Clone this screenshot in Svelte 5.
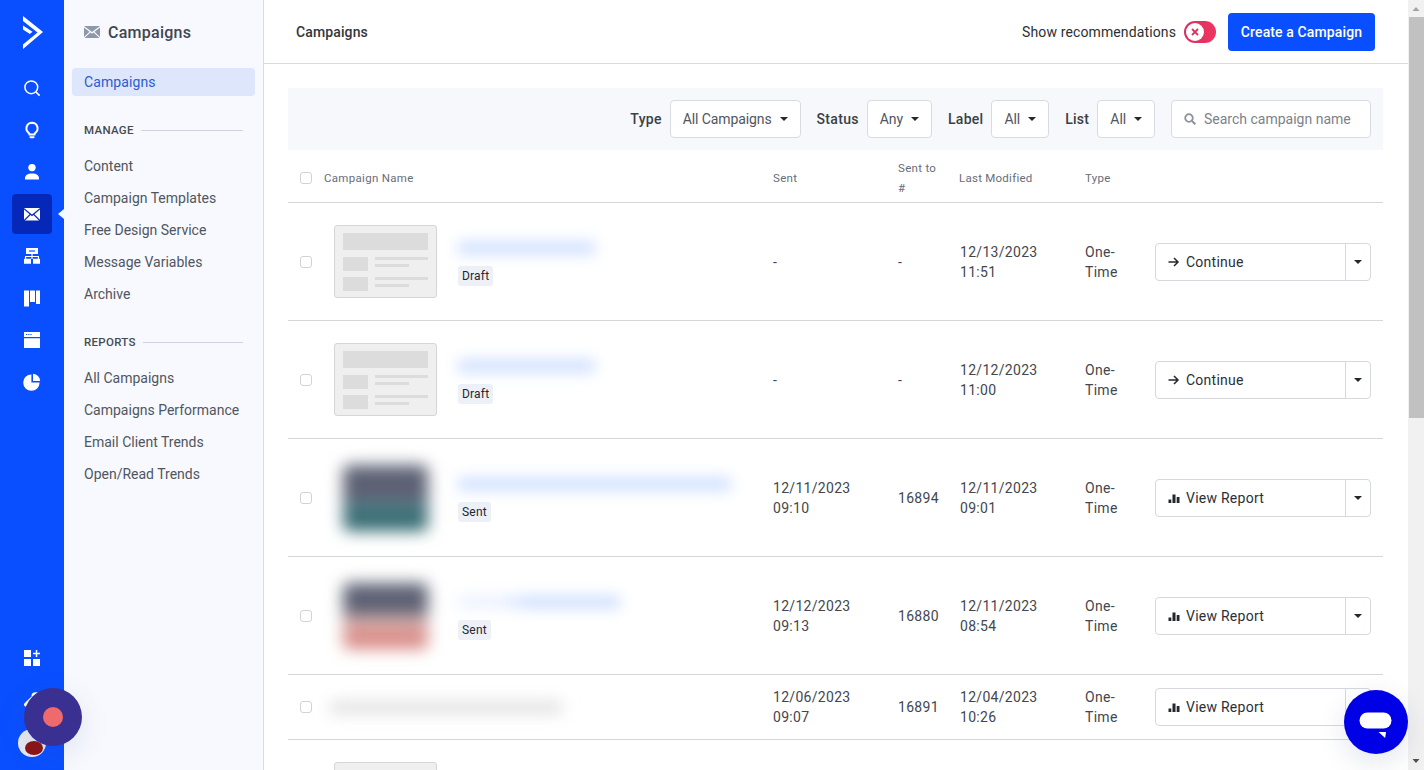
<script lang="ts">
  const manage = ['Content', 'Campaign Templates', 'Free Design Service', 'Message Variables', 'Archive'];
  const reports = ['All Campaigns', 'Campaigns Performance', 'Email Client Trends', 'Open/Read Trends'];

  const filters = [
    { label: 'Type', value: 'All Campaigns' },
    { label: 'Status', value: 'Any' },
    { label: 'Label', value: 'All' },
    { label: 'List', value: 'All' }
  ];

  const rows = [
    { thumb: 'draft', titleWidth: 137, status: 'Draft', sent: ['-'], count: '-', modified: ['12/13/2023', '11:51'], type: 'One-Time', action: 'Continue' },
    { thumb: 'draft', titleWidth: 137, status: 'Draft', sent: ['-'], count: '-', modified: ['12/12/2023', '11:00'], type: 'One-Time', action: 'Continue' },
    { thumb: 'teal', titleWidth: 273, status: 'Sent', sent: ['12/11/2023', '09:10'], count: '16894', modified: ['12/11/2023', '09:01'], type: 'One-Time', action: 'View Report' },
    { thumb: 'red', titleWidth: 162, status: 'Sent', sent: ['12/12/2023', '09:13'], count: '16880', modified: ['12/11/2023', '08:54'], type: 'One-Time', action: 'View Report' },
    { thumb: '', titleWidth: 0, status: '', sent: ['12/06/2023', '09:07'], count: '16891', modified: ['12/04/2023', '10:26'], type: 'One-Time', action: 'View Report' },
    { thumb: 'draft', titleWidth: 0, status: '', sent: [], count: '', modified: [], type: '', action: '' }
  ];
</script>

{#snippet railIcon(name)}
  <svg viewBox="0 0 20 20" width="20" height="20" fill="#fff">
    {#if name === 'search'}
      <circle cx="9.3" cy="9.3" r="6.4" fill="none" stroke="#fff" stroke-width="1.5" />
      <path d="M14 14l3.6 3.6" stroke="#fff" stroke-width="1.7" />
    {:else if name === 'bulb'}
      <path d="M10 2.8a5.6 5.6 0 0 0-3.3 10.1c.6.5.9 1 .9 1.6h4.8c0-.6.3-1.1.9-1.6A5.6 5.6 0 0 0 10 2.8z" fill="none" stroke="#fff" stroke-width="2" />
      <path d="M7.6 16.2h4.8v1.1l-1 1h-2.8l-1-1z" />
    {:else if name === 'person'}
      <circle cx="10" cy="5.6" r="3.7" />
      <path d="M3 17.6v-1.4c0-3 2.6-4.8 7-4.8s7 1.8 7 4.8v1.4z" />
    {:else if name === 'mail'}
      <path d="M2 4h16L10 10.6z" />
      <path d="M2 5.6v10.2l5.6-5.6zM18 5.6v10.2l-5.6-5.6zM8.6 11l1.4 1.2 1.4-1.2 5.6 5.6H3z" />
    {:else if name === 'flow'}
      <path d="M4 2h12v6H4z" />
      <path d="M7 4.400h6v1.200H7z" fill="#0a4fff" />
      <path d="M9.400 8h1.200v1.900h6.400V13h-1.200v-1.900H10.600V13H9.400v-1.900H4.200V13H3V9.900h6.400z" />
      <path d="M2 12.800h7v5H2zM11 12.800h7v5h-7z" />
    {:else if name === 'board'}
      <path d="M2 2.500h5v16H2zM8 2.500h5v11.500H8zM14 2.500h4v13.500h-4z" />
    {:else if name === 'window'}
      <path d="M2 2h16v5H2zM2 8.200h16V18H2z" />
      <path d="M4 4h1.200v1H4zM6.200 4h1.200v1H6.200zM8.400 4h1.200v1H8.400z" fill="#0a4fff" />
    {:else if name === 'pie'}
      <path d="M11 1.800A8.200 8.200 0 0 1 18.200 9H11z" />
      <path d="M9.400 2.400v8.200h8.200A8.200 8.200 0 1 1 9.400 2.400z" />
    {:else if name === 'add'}
      <path d="M2 2h7v7H2zM2 11h7v7H2zM11 11h7v7h-7z" />
      <path d="M13.800 2h1.500v2.800h2.700v1.400h-2.700V9h-1.500V6.200H11V4.800h2.800z" />
    {:else if name === 'wrench'}
      <path d="M16 2.500l-3 3 1.500 1.500 3-3c.6 2.500-1 5-3.500 5-.6 0-1 0-1.500-.2L5.500 16a2 2 0 0 1-3-2.800l7.200-7C9 3 12.500 1.500 16 2.500z" />
    {/if}
  </svg>
{/snippet}

{#snippet caret()}
  <svg class="caret" viewBox="0 0 8 4" width="8" height="4"><path d="M0 0h8L4 4z" fill="#23272e" /></svg>
{/snippet}

<div class="page">
  <nav class="rail">
    <div class="logo">
      <svg viewBox="0 0 20 33" width="20" height="33" fill="#fff">
        <path d="M0 0 20 16 0 33v-4.500L14.500 16.500 0 5z" />
        <path d="M0 9.500 9.500 15.800 6.800 18 0 13.500z" />
      </svg>
    </div>
    <div class="rail-group">
      {#each ['search', 'bulb', 'person', 'mail', 'flow', 'board', 'window', 'pie'] as icon}
        <div class="rail-item" class:active={icon === 'mail'}>{@render railIcon(icon)}</div>
      {/each}
    </div>
    <div class="rail-bottom">
      <div class="rail-item">{@render railIcon('add')}</div>
      <div class="rail-item">{@render railIcon('wrench')}</div>
      <div class="rail-item">
        <div class="avatar"><span class="avatar-mark"></span></div>
      </div>
    </div>
  </nav>

  <aside class="side">
    <div class="side-title">
      <svg viewBox="0 0 16 12" width="16" height="12"><path d="M0 0h16L8 6z M0 1.500v9.500L5.500 5.800z M16 1.500v9.500L10.500 5.800z M6.400 6.600 8 7.800l1.600-1.200L15.500 12H.5z" fill="#8f98a8" /></svg>
      <span>Campaigns</span>
    </div>
    <a class="side-active" href="#campaigns">Campaigns</a>

    <div class="side-heading first"><span>MANAGE</span><i></i></div>
    {#each manage as item}
      <div class="side-item">{item}</div>
    {/each}

    <div class="side-heading"><span>REPORTS</span><i></i></div>
    {#each reports as item}
      <div class="side-item">{item}</div>
    {/each}
  </aside>

  <main class="main">
    <header class="top">
      <span class="top-title">Campaigns</span>
      <div class="top-right">
        <span class="rec">Show recommendations</span>
        <div class="toggle">
          <span class="knob">
            <svg viewBox="0 0 8 8" width="8" height="8"><path d="M1 1l6 6M7 1L1 7" stroke="#e0305f" stroke-width="1.800" /></svg>
          </span>
        </div>
        <button class="create">Create a Campaign</button>
      </div>
    </header>

    <div class="content">
      <div class="filters">
        {#each filters as f}
          <div class="filter">
            <span class="filter-label">{f.label}</span>
            <div class="select">{f.value}{@render caret()}</div>
          </div>
        {/each}
        <div class="search">
          <svg viewBox="0 0 12 12" width="12" height="12"><circle cx="5" cy="5" r="3.800" fill="none" stroke="#8c929c" stroke-width="1.800" /><path d="M8 8l3.300 3.300" stroke="#8c929c" stroke-width="2" /></svg>
          <span>Search campaign name</span>
        </div>
      </div>

      <div class="grid head">
        <div class="check-cell"><span class="check"></span></div>
        <div>Campaign Name</div>
        <div>Sent</div>
        <div>Sent to<br />#</div>
        <div class="nudge">Last Modified</div>
        <div>Type</div>
        <div></div>
      </div>

      {#each rows as row}
        <div class="grid row" class:compact={!row.thumb}>
          <div class="check-cell">{#if row.action}<span class="check"></span>{/if}</div>
          <div class="name">
            {#if row.thumb}
              <div class="thumb-box">
                {#if row.thumb === 'draft'}
                  <div class="thumb">
                    <div class="ph-top"></div>
                    <div class="ph-line"><b></b><span><i></i><i class="short"></i></span></div>
                    <div class="ph-line"><b></b><span><i></i><i class="short"></i></span></div>
                  </div>
                {:else}
                  <div class="thumb-blur {row.thumb}"></div>
                {/if}
              </div>
              {#if row.status}
                <div class="name-text">
                  <div class="title-blur" class:fade={row.thumb === 'red'} style="width: {row.titleWidth}px"></div>
                  <span class="badge">{row.status}</span>
                </div>
              {/if}
            {:else}
              <div class="plain-blur"></div>
            {/if}
          </div>
          <div>{#each row.sent as l}<div>{l}</div>{/each}</div>
          <div>{row.count}</div>
          <div>{#each row.modified as l}<div>{l}</div>{/each}</div>
          <div class="type">{row.type}</div>
          <div class="action-cell">
            {#if row.action}
              <div class="action">
                <div class="action-main">
                  {#if row.action === 'Continue'}
                    <svg viewBox="0 0 12 12" width="12" height="12"><path d="M.5 6h9.500M6 2 10 6l-4 4" fill="none" stroke="#23272e" stroke-width="1.500" /></svg>
                  {:else}
                    <svg viewBox="0 0 12 12" width="12" height="12"><path d="M.5 7.500h2.800v3.500H.5zM4.500 2.500h3v8.500h-3zM8.700 5h2.800v6H8.700z" fill="#23272e" /></svg>
                  {/if}
                  <span>{row.action}</span>
                </div>
                <div class="action-more">{@render caret()}</div>
              </div>
            {/if}
          </div>
        </div>
      {/each}
    </div>
  </main>

  <div class="scrollbar">
    <svg viewBox="0 0 16 17" width="16" height="17"><path d="M4.500 11 8 7l3.500 4z" fill="#a3a3a3" /></svg>
    <div class="scroll-track"><div class="scroll-thumb"></div></div>
    <svg viewBox="0 0 16 17" width="16" height="17"><path d="M4.500 6 8 10l3.500-4z" fill="#505050" /></svg>
  </div>

  <div class="record"><span></span></div>
  <div class="chat">
    <svg viewBox="0 0 34 28" width="34" height="28">
      <rect x="0.500" y="0.500" width="32" height="16" rx="8" fill="#fff" />
      <path d="M19.500 20h7.500l-.8 6z" fill="#fff" />
    </svg>
  </div>
</div>

<style>
  :global(body) {
    margin: 0;
    background: #fff;
  }

  .page {
    position: relative;
    display: flex;
    height: 770px;
    overflow: hidden;
    font-family: Roboto, "Noto Sans", sans-serif;
    font-size: 14px;
    letter-spacing: 0.3px;
    color: #2b2f36;
  }

  /* icon rail */
  .rail {
    flex: 0 0 64px;
    display: flex;
    flex-direction: column;
    align-items: center;
    background: #0a4fff;
  }

  .logo {
    height: 64px;
    width: 40px;
    display: flex;
    align-items: center;
    justify-content: center;
    padding-left: 1px;
    box-sizing: border-box;
  }

  .rail-group {
    margin-top: 3.5px;
    display: flex;
    flex-direction: column;
    gap: 2.1px;
  }

  .rail-bottom {
    margin-top: auto;
    padding-bottom: 8px;
    display: flex;
    flex-direction: column;
    gap: 2px;
  }

  .rail-item {
    position: relative;
    width: 40px;
    height: 40px;
    display: flex;
    align-items: center;
    justify-content: center;
    border-radius: 4px;
  }

  .rail-item.active {
    background: #0628b8;
  }

  .rail-item.active::after {
    content: '';
    position: absolute;
    left: 46px;
    top: 15px;
    border: 5px solid transparent;
    border-left: 0;
    border-right: 6px solid #f7f9fe;
  }

  .avatar {
    position: relative;
    width: 28px;
    height: 28px;
    margin-top: 2px;
    border-radius: 50%;
    background: #e6e9f2;
    overflow: hidden;
  }

  .avatar-mark {
    position: absolute;
    left: 7px;
    top: 12px;
    width: 18px;
    height: 14px;
    border-radius: 50%;
    background: #8c1414;
  }

  /* secondary sidebar */
  .side {
    flex: 0 0 199px;
    background: #f7f9fe;
    border-right: 1px solid #d8dbe3;
  }

  .side-title {
    height: 64px;
    padding-left: 20px;
    display: flex;
    align-items: center;
    gap: 8px;
    font-size: 16px;
    font-weight: 500;
    letter-spacing: 0.25px;
    color: #41464e;
  }

  .side-active {
    display: block;
    margin: 4px 8px 0;
    height: 28px;
    line-height: 28px;
    padding-left: 12px;
    border-radius: 4px;
    background: #dde6fb;
    color: #2c5ccf;
    text-decoration: none;
    letter-spacing: 0.1px;
  }

  .side-heading {
    margin: 24px 20px 12px;
    height: 16px;
    display: flex;
    align-items: center;
    gap: 7px;
    font-size: 11.500px;
    font-weight: 500;
    color: #464b53;
  }

  .side-heading.first {
    margin-top: 26px;
  }

  .side-heading i {
    flex: 1;
    height: 1px;
    background: #cfd3e0;
  }

  .side-item {
    height: 32px;
    line-height: 32px;
    padding-left: 20px;
    color: #50565f;
    letter-spacing: 0;
  }

  /* main column */
  .main {
    flex: 1;
    min-width: 0;
    display: flex;
    flex-direction: column;
  }

  .top {
    flex: 0 0 63px;
    display: flex;
    align-items: center;
    justify-content: space-between;
    padding: 0 33px 0 32px;
    border-bottom: 1px solid #d5dbe0;
    letter-spacing: 0.12px;
  }

  .top-title {
    font-weight: 500;
    color: #32363d;
  }

  .top-right {
    display: flex;
    align-items: center;
  }

  .toggle {
    width: 32px;
    height: 22px;
    margin: 0 12px 0 8px;
    border-radius: 11px;
    background: linear-gradient(to right, #d63062, #ef3560);
    display: flex;
    align-items: center;
    padding-left: 2px;
    box-sizing: border-box;
  }

  .knob {
    width: 18px;
    height: 18px;
    border-radius: 50%;
    background: #fff;
    display: flex;
    align-items: center;
    justify-content: center;
  }

  .create {
    width: 147px;
    height: 38px;
    border: 0;
    border-radius: 4px;
    background: #0a4fff;
    color: #fff;
    font: inherit;
    font-weight: 500;
    letter-spacing: inherit;
    padding: 0;
  }

  .content {
    flex: 1;
    min-height: 0;
    overflow: hidden;
    padding: 24px 25px 0 24px;
  }

  .filters {
    height: 62px;
    display: flex;
    align-items: center;
    justify-content: flex-end;
    gap: 16px;
    padding-right: 12px;
    background: #f6f8fc;
  }

  .filter {
    display: flex;
    align-items: center;
    gap: 8px;
  }

  .filter-label {
    font-weight: 500;
    color: #3b3f46;
  }

  .select {
    height: 38px;
    box-sizing: border-box;
    padding: 0 12px;
    display: flex;
    align-items: center;
    gap: 8px;
    background: #fff;
    border: 1px solid #d8dbe2;
    border-radius: 4px;
    color: #50565f;
    letter-spacing: -0.1px;
  }

  .search {
    width: 200px;
    height: 38px;
    box-sizing: border-box;
    padding-left: 12px;
    display: flex;
    align-items: center;
    gap: 8px;
    background: #fff;
    border: 1px solid #d8dbe2;
    border-radius: 4px;
    color: #7c828c;
    letter-spacing: 0;
  }

  /* table */
  .grid {
    display: grid;
    grid-template-columns: 36px 449px 125px 62px 125px 70px 228px;
    align-items: center;
    border-bottom: 1px solid #d4d6da;
    line-height: 20px;
  }

  .head {
    box-sizing: border-box;
    padding-top: 4px;
    height: 53px;
    font-size: 11.500px;
    color: #686e78;
  }

  .nudge {
    margin-left: -1px;
    letter-spacing: 0.25px;
  }

  .row {
    height: 117px;
    color: #42474f;
  }

  .row.compact {
    height: 64px;
  }

  .check-cell {
    padding-left: 12px;
    display: flex;
  }

  .check {
    width: 10px;
    height: 10px;
    border: 1px solid #d0d3d8;
    border-radius: 3px;
    background: #fff;
  }

  .name {
    display: flex;
    align-items: center;
    gap: 21px;
    padding-left: 10px;
  }

  .thumb-box {
    flex: 0 0 103px;
    height: 73px;
  }

  .thumb {
    height: 100%;
    box-sizing: border-box;
    padding: 7px 8px 6px;
    display: flex;
    flex-direction: column;
    justify-content: space-between;
    background: #efefef;
    border: 1px solid #d6d6d6;
    border-radius: 3px;
  }

  .ph-top {
    height: 17px;
    background: #dcdcdc;
  }

  .ph-line {
    display: flex;
    gap: 7px;
  }

  .ph-line b {
    width: 25px;
    height: 14px;
    background: #dcdcdc;
  }

  .ph-line span {
    flex: 1;
    display: flex;
    flex-direction: column;
    gap: 4px;
  }

  .ph-line i {
    display: block;
    height: 3px;
    background: #dcdcdc;
  }

  .ph-line i.short {
    width: 65%;
  }

  .thumb-blur {
    height: 66px;
    margin: 4px 9px 0;
    border-radius: 6px;
    filter: blur(8px);
  }

  .thumb-blur.teal {
    background: linear-gradient(#5d6174 0 50%, #56808a 58%, #32696f 85%);
  }

  .thumb-blur.red {
    background: linear-gradient(#5d6174 0 42%, #d8b4b2 55%, #da8984 85%);
  }

  .name-text {
    display: flex;
    flex-direction: column;
    align-items: flex-start;
    gap: 8px;
  }

  .title-blur {
    height: 14px;
    margin: 3px 0;
    background: #d3e2ff;
    filter: blur(7px);
  }

  .title-blur.fade {
    background: linear-gradient(to right, #eef3ff 0 25%, #d3e2ff 45%);
  }

  .plain-blur {
    width: 232px;
    height: 11px;
    background: #dcdcdc;
    filter: blur(8px);
    margin-left: -4px;
  }

  .badge {
    height: 20px;
    padding: 0 4px;
    font-size: 12px;
    line-height: 20px;
    letter-spacing: 0.2px;
    background: #eef0f8;
    border-radius: 3px;
    color: #23272e;
  }

  .type {
    max-width: 50px;
  }

  .action {
    width: 216px;
    height: 38px;
    box-sizing: border-box;
    display: flex;
    background: #fff;
    border: 1px solid #d5d8dd;
    border-radius: 4px;
  }

  .action-main {
    flex: 1;
    display: flex;
    align-items: center;
    gap: 6px;
    padding-left: 12px;
    color: #2b2f36;
    letter-spacing: 0.25px;
  }

  .action-more {
    flex: 0 0 24px;
    display: flex;
    align-items: center;
    justify-content: center;
    border-left: 1px solid #d5d8dd;
  }

  /* fake browser scrollbar */
  .scrollbar {
    flex: 0 0 16px;
    display: flex;
    flex-direction: column;
    background: #f1f1f1;
  }

  .scroll-track {
    flex: 1;
    padding-left: 1px;
  }

  .scroll-thumb {
    height: 401px;
    background: #c1c1c1;
  }

  /* floating widgets */
  .record {
    position: absolute;
    left: 24px;
    top: 688px;
    width: 58px;
    height: 58px;
    border-radius: 50%;
    background: #3a3092;
    display: flex;
    align-items: center;
    justify-content: center;
    box-shadow: 0 8px 30px rgba(60, 70, 120, 0.12);
  }

  .record span {
    width: 20px;
    height: 20px;
    border-radius: 50%;
    background: #ee6a6c;
  }

  .chat {
    position: absolute;
    left: 1344px;
    top: 690px;
    width: 64px;
    height: 64px;
    border-radius: 50%;
    background: #0000e6;
    display: flex;
    align-items: center;
    justify-content: center;
    box-shadow: 0 8px 28px rgba(60, 70, 120, 0.14);
  }

  .chat svg {
    margin-top: 8px;
  }
</style>
